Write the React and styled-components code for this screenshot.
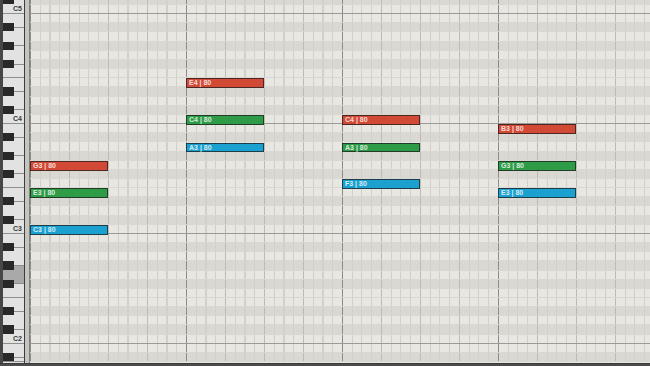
import styled, { createGlobalStyle } from 'styled-components'

const ROW = 110 / 12
const TOP_NOTE = 73 // C#5, the row cut off at the top
const ROWS = 40
const BAR = 156

const GlobalStyle = createGlobalStyle`
  html, body {
    margin: 0;
    padding: 0;
    overflow: hidden;
    background: #4f4f4f;
  }
`

const isBlack = (n) => [1, 3, 6, 8, 10].includes(((n % 12) + 12) % 12)
const NAMES = ['C', 'C#', 'D', 'D#', 'E', 'F', 'F#', 'G', 'G#', 'A', 'A#', 'B']
const nameOf = (n) => NAMES[n % 12] + (Math.floor(n / 12) - 1)

const notes = [
  { pitch: 55, col: 0, color: 'red' },
  { pitch: 52, col: 0, color: 'green' },
  { pitch: 48, col: 0, color: 'blue' },
  { pitch: 64, col: 1, color: 'red' },
  { pitch: 60, col: 1, color: 'green' },
  { pitch: 57, col: 1, color: 'blue' },
  { pitch: 60, col: 2, color: 'red' },
  { pitch: 57, col: 2, color: 'green' },
  { pitch: 53, col: 2, color: 'blue' },
  { pitch: 59, col: 3, color: 'red' },
  { pitch: 55, col: 3, color: 'green' },
  { pitch: 52, col: 3, color: 'blue' },
]

const FILLS = {
  red: '#d24a36',
  green: '#2e9c47',
  blue: '#1ba1d0',
}

const Page = styled.div`
  display: flex;
  flex-direction: column;
  width: 650px;
  height: 366px;
  overflow: hidden;
`

const Main = styled.div`
  display: flex;
  height: 362.5px;
  overflow: hidden;
  background: #e9e7e2;
`

const BottomBar = styled.div`
  flex: 1;
  background: #4d4d4d;
  border-top: 1px solid #3a3a3a;
`

const Keyboard = styled.div`
  display: flex;
  flex: none;
  width: 30px;
`

const KeyEdge = styled.div`
  width: 3px;
  background: #474747;
`

const Keys = styled.div`
  display: grid;
  width: 21px;
  grid-template-columns: 11px 10px;
  grid-template-rows: repeat(${ROWS * 2}, ${ROW / 2}px);
  margin-top: -${ROW - 5}px;
  background: #e2e2e2;
  border-right: 1px solid #3d3d3d;
`

const WhiteKey = styled.div`
  grid-column: 1 / 3;
  grid-row: ${(p) => p.$from} / ${(p) => p.$to};
  box-sizing: border-box;
  display: flex;
  align-items: flex-end;
  justify-content: flex-end;
  padding: 0 2px 1px 0;
  background: ${(p) => (p.$active ? '#a9a9a9' : '#e2e2e2')};
  border-bottom: 1px solid #8e8e8e;
  font: bold 7px 'Liberation Sans', Arial, sans-serif;
  color: #3a3a3a;
  line-height: 7px;
`

const BlackKey = styled.div`
  grid-column: 1;
  grid-row: ${(p) => p.$from} / span 2;
  z-index: 1;
  margin-bottom: 1px;
  background: #282828;
`

const Gutter = styled.div`
  width: 4px;
  background: #c6c4bf;
  border-right: 1px solid #7e7e7c;
`

const Grid = styled.div`
  position: relative;
  flex: 1;
  display: flex;
  flex-direction: column;
  margin-top: -${ROW - 5}px;
`

const Row = styled.div`
  flex: none;
  box-sizing: border-box;
  height: ${ROW}px;
  border-bottom: 1px solid ${(p) => (p.$octave ? '#9b9a97' : '#d9d7d2')};
  background-color: ${(p) => (p.$black ? '#dad8d3' : '#e9e7e2')};
  background-image:
    repeating-linear-gradient(to right, #8d8c8a 0 1px, transparent 1px ${BAR}px),
    repeating-linear-gradient(to right, #bdbbb6 0 1px, transparent 1px ${BAR / 4}px),
    repeating-linear-gradient(to right, #d2d0cb 0 1px, transparent 1px ${BAR / 16}px);
`

const Note = styled.div`
  position: absolute;
  box-sizing: border-box;
  width: ${BAR / 2}px;
  height: ${ROW + 0.5}px;
  padding-left: 2px;
  background: ${(p) => FILLS[p.$color]};
  border: 1px solid rgba(30, 30, 30, 0.75);
  font: bold 7px 'Liberation Sans', Arial, sans-serif;
  line-height: ${ROW - 2}px;
  color: rgba(255, 255, 255, 0.82);
  white-space: nowrap;
`

function PianoKeys() {
  const keys = []
  for (let r = -1; r <= ROWS; r++) {
    const n = TOP_NOTE - r
    if (isBlack(n)) {
      if (r >= 0 && r < ROWS) keys.push(<BlackKey key={n} $from={2 * r + 1} />)
      continue
    }
    const top = Math.max(0, 2 * r - (isBlack(n + 1) ? 1 : 0))
    const bottom = Math.min(ROWS * 2, 2 * r + 2 + (isBlack(n - 1) ? 1 : 0))
    if (bottom <= top) continue
    keys.push(
      <WhiteKey key={n} $from={top + 1} $to={bottom + 1} $active={n === 43}>
        {n % 12 === 0 ? nameOf(n) : null}
      </WhiteKey>
    )
  }
  return <Keys>{keys}</Keys>
}

export default function App() {
  const rows = Array.from({ length: ROWS }, (_, r) => TOP_NOTE - r)
  return (
    <Page>
      <GlobalStyle />
      <Main>
        <Keyboard>
          <KeyEdge />
          <PianoKeys />
          <Gutter />
        </Keyboard>
        <Grid>
          {rows.map((n) => (
            <Row key={n} $black={isBlack(n)} $octave={n % 12 === 0} />
          ))}
          {notes.map((note, i) => (
            <Note
              key={i}
              $color={note.color}
              style={{
                left: note.col * BAR,
                top: (TOP_NOTE - note.pitch) * ROW,
              }}
            >
              {nameOf(note.pitch)} | 80
            </Note>
          ))}
        </Grid>
      </Main>
      <BottomBar />
    </Page>
  )
}
